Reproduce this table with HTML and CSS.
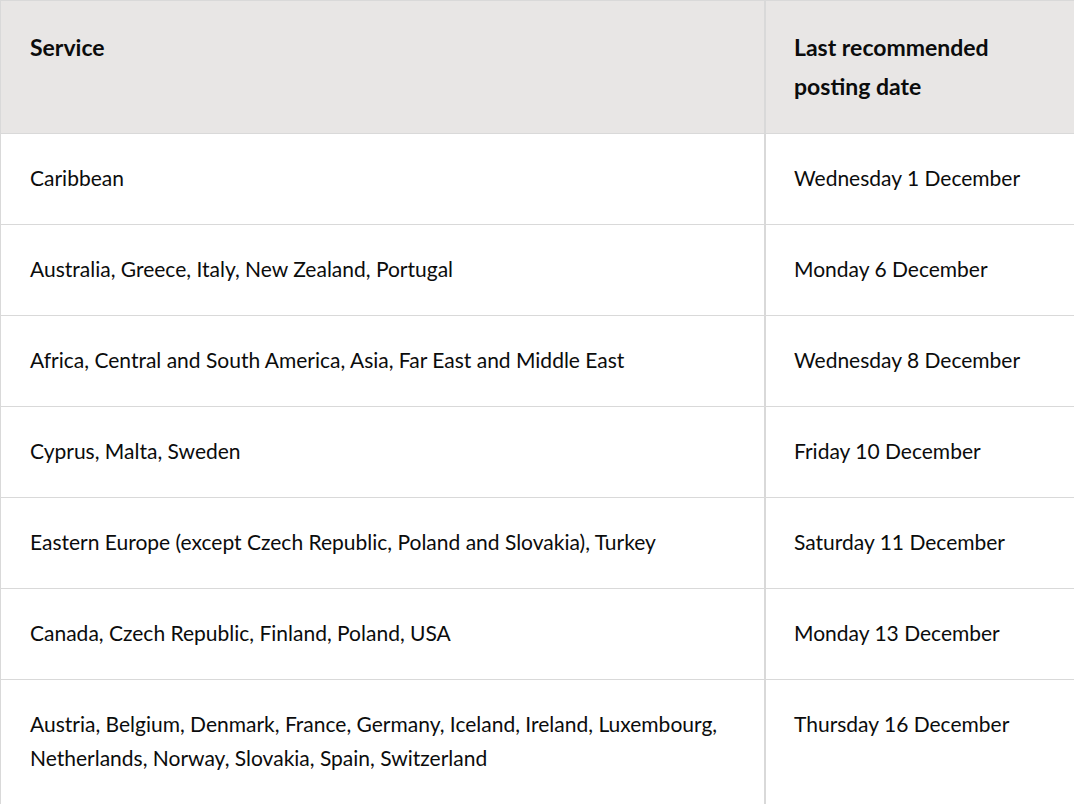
FILE: index.html
```html
<!DOCTYPE html>
<html lang="en">
<head>
<meta charset="utf-8">
<title>Last recommended posting dates</title>
<link rel="stylesheet" href="styles.css">
</head>
<body>
<table class="dates">
  <thead>
    <tr>
      <th class="col-service">Service</th>
      <th class="col-date">Last recommended<br>posting date</th>
    </tr>
  </thead>
  <tbody>
    <tr><td>Caribbean</td><td>Wednesday 1 December</td></tr>
    <tr><td>Australia, Greece, Italy, New Zealand, Portugal</td><td>Monday 6 December</td></tr>
    <tr><td>Africa, Central and South America, Asia, Far East and Middle East</td><td>Wednesday 8 December</td></tr>
    <tr><td>Cyprus, Malta, Sweden</td><td>Friday 10 December</td></tr>
    <tr><td>Eastern Europe (except Czech Republic, Poland and Slovakia), Turkey</td><td>Saturday 11 December</td></tr>
    <tr><td>Canada, Czech Republic, Finland, Poland, USA</td><td>Monday 13 December</td></tr>
    <tr><td>Austria, Belgium, Denmark, France, Germany, Iceland, Ireland, Luxembourg, Netherlands, Norway, Slovakia, Spain, Switzerland</td><td>Thursday 16 December</td></tr>
  </tbody>
</table>
</body>
</html>
```
FILE: styles.css
```css
html, body {
  margin: 0;
  padding: 0;
  background: #ffffff;
}

.dates {
  width: 1074px;
  border-collapse: separate;
  border-spacing: 0;
  table-layout: fixed;
  font-family: Lato, "Liberation Sans", sans-serif;
  color: #0b0c0c;
  border-top: 1px solid #d9d9d9;
  border-left: 1px solid #d9d9d9;
}

.dates th,
.dates td {
  box-sizing: border-box;
  text-align: left;
  vertical-align: top;
  border-bottom: 1px solid #d9d9d9;
}

.col-service {
  width: 765px;
}

.dates th {
  background: #e8e6e5;
  font-weight: 700;
  font-size: 23px;
  line-height: 39px;
  padding: 27px 20px 27px 29px;
}

.dates td {
  font-size: 21px;
  line-height: 34px;
  padding: 27px 20px 29px 29px;
}

.dates th:first-child,
.dates td:first-child {
  border-right: 2px solid #d9d9d9;
}

.dates th:last-child,
.dates td:last-child {
  padding-left: 28px;
}
```
